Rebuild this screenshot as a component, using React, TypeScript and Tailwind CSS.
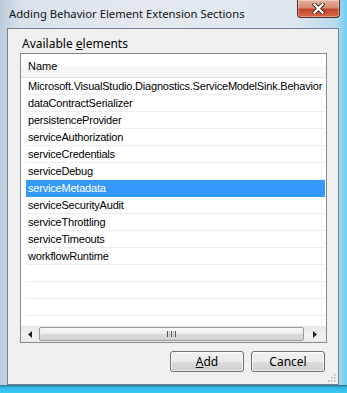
const items = [
  'Microsoft.VisualStudio.Diagnostics.ServiceModelSink.Behavior',
  'dataContractSerializer',
  'persistenceProvider',
  'serviceAuthorization',
  'serviceCredentials',
  'serviceDebug',
  'serviceMetadata',
  'serviceSecurityAudit',
  'serviceThrottling',
  'serviceTimeouts',
  'workflowRuntime',
];

const SELECTED = 'serviceMetadata';

export default function App() {
  const rows: (string | null)[] = [...items, null, null, null, null];

  return (
    <div className="relative flex h-[393px] w-[347px] flex-col overflow-hidden bg-[linear-gradient(90deg,#bccbdb_0%,#d9e2eb_6%,#e3e9ef_40%,#dfe7ee_85%,#b3d9ee_97%,#6ccdf0_100%)] font-['Noto_Sans',sans-serif] text-black">
      <TitleBar />
      <div className="flex flex-1">
        <div className="w-[7px]" />
        <div className="flex w-[332px] flex-col border border-[#6f7f8f] bg-[#f0f0f0] px-[12px] pt-[7px]">
          <p className="pl-[2px] text-[12px] leading-[16px]">
            Available <span className="underline">e</span>lements
          </p>
          <div className="mt-[1px] flex h-[290px] w-[307px] flex-col border border-[#828790] bg-white">
            <div className="flex h-[24px] items-center border-b border-[#e5e5e5] bg-[linear-gradient(180deg,#ffffff_0%,#ffffff_50%,#f7f8f9_51%,#f2f3f4_100%)] pl-[7px] pt-[2px] font-['Liberation_Sans',sans-serif] text-[11px]">
              Name
            </div>
            <div className="h-[248px] overflow-hidden pl-[5px] pr-[1px]">
              {rows.map((item, i) => (
                <div
                  key={i}
                  className={
                    item === SELECTED
                      ? 'flex h-[17px] items-center whitespace-nowrap border-b border-[#3399ff] bg-[#3399ff] pl-[2px] pt-[1px] font-["Liberation_Sans",sans-serif] text-[11px] tracking-[-0.2px] text-white'
                      : 'flex h-[17px] items-center whitespace-nowrap border-b border-[#ededed] pl-[2px] pt-[1px] font-["Liberation_Sans",sans-serif] text-[11px] tracking-[-0.2px]'
                  }
                >
                  {item}
                </div>
              ))}
            </div>
            <HScrollBar />
          </div>
          <div className="mt-[8px] flex justify-end gap-[7px] pr-[1px]">
            <Button>
              <span className="underline">A</span>dd
            </Button>
            <Button>Cancel</Button>
          </div>
          <div className="-mr-[10px] mt-auto flex justify-end pb-[2px]">
            <SizeGrip />
          </div>
        </div>
        <div className="w-[8px]" />
      </div>
      <div className="h-[8px] bg-[linear-gradient(180deg,#3a6a80_0%,#2fb9e6_30%,#3ccaf0_100%)]" />
    </div>
  );
}

function TitleBar() {
  return (
    <div className="relative flex h-[28px] items-center pl-[9px]">
      <span className="text-[11.25px] leading-none text-[#111]">
        Adding Behavior Element Extension Sections
      </span>
      <div className="absolute right-[7px] top-0 flex h-[18px] w-[43px] items-center justify-center rounded-b-[4px] border border-t-0 border-[#5a2a22] bg-[linear-gradient(180deg,#e7b2a2_0%,#d88a72_45%,#c2452c_55%,#d6694c_100%)] shadow-[inset_0_0_0_1px_rgba(255,255,255,0.35)]">
        <svg width="13" height="11" viewBox="0 0 13 11">
          <path
            d="M2.5 1.5 L10.5 9.5 M10.5 1.5 L2.5 9.5"
            stroke="#3a1a14"
            strokeWidth="4"
            strokeLinecap="square"
          />
          <path
            d="M2.5 1.5 L10.5 9.5 M10.5 1.5 L2.5 9.5"
            stroke="#ffffff"
            strokeWidth="2.4"
            strokeLinecap="square"
          />
        </svg>
      </div>
    </div>
  );
}

function HScrollBar() {
  return (
    <div className="flex h-[16px] items-center bg-[linear-gradient(180deg,#e6e6e6_0%,#f2f2f2_50%,#eaeaea_100%)]">
      <div className="flex h-full w-[18px] items-center justify-center">
        <svg width="4" height="7" viewBox="0 0 4 7">
          <path d="M4 0 L0 3.5 L4 7 Z" fill="#222" />
        </svg>
      </div>
      <div className="relative flex h-[14px] w-[265px] items-center justify-center rounded-[2px] border border-[#9a9a9a] bg-[linear-gradient(180deg,#f7f7f7_0%,#ececec_50%,#dadada_51%,#d2d2d2_100%)]">
        <div className="flex gap-[1px]">
          <span className="h-[6px] w-[1px] bg-[#555]" />
          <span className="h-[6px] w-[1px] bg-[#bbb]" />
          <span className="h-[6px] w-[1px] bg-[#555]" />
          <span className="h-[6px] w-[1px] bg-[#bbb]" />
          <span className="h-[6px] w-[1px] bg-[#555]" />
        </div>
      </div>
      <div className="flex h-full flex-1 items-center justify-center">
        <svg width="4" height="7" viewBox="0 0 4 7">
          <path d="M0 0 L4 3.5 L0 7 Z" fill="#222" />
        </svg>
      </div>
    </div>
  );
}

function Button({ children }: { children: React.ReactNode }) {
  return (
    <button
      type="button"
      className="flex h-[21px] w-[74px] items-center justify-center rounded-[3px] border border-[#707070] bg-[linear-gradient(180deg,#f2f2f2_0%,#ebebeb_50%,#dddddd_51%,#cfcfcf_100%)] text-[12px] leading-none shadow-[inset_0_0_0_1px_rgba(255,255,255,0.7)]"
    >
      {children}
    </button>
  );
}

function SizeGrip() {
  return (
    <svg width="10" height="10" viewBox="0 0 10 10">
      {[
        [8, 2],
        [8, 5],
        [5, 5],
        [8, 8],
        [5, 8],
        [2, 8],
      ].map(([x, y], i) => (
        <rect key={i} x={x} y={y} width="1.5" height="1.5" fill="#b0b0b0" />
      ))}
    </svg>
  );
}
